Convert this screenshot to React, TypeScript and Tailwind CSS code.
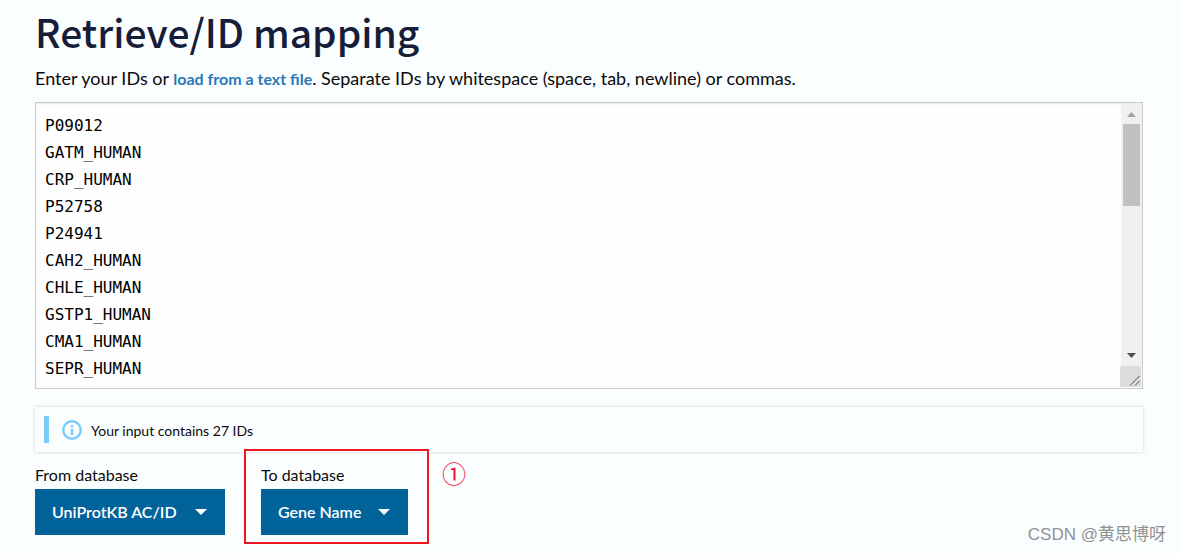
import { useState } from 'react';

const INITIAL_IDS = [
  'P09012',
  'GATM_HUMAN',
  'CRP_HUMAN',
  'P52758',
  'P24941',
  'CAH2_HUMAN',
  'CHLE_HUMAN',
  'GSTP1_HUMAN',
  'CMA1_HUMAN',
  'SEPR_HUMAN',
];

function DatabaseSelect({
  id,
  label,
  option,
  width,
}: {
  id: string;
  label: string;
  option: string;
  width: string;
}) {
  return (
    <div className="flex flex-col">
      <label htmlFor={id} className="text-base leading-7">
        {label}
      </label>
      <div className="relative">
        <select
          id={id}
          className={`h-[46px] appearance-none bg-[#00639a] pl-[17px] text-base font-semibold text-white ${width}`}
        >
          <option>{option}</option>
        </select>
        <svg
          className="pointer-events-none absolute top-1/2 right-[18px] h-[6px] w-3 -translate-y-1/2"
          viewBox="0 0 12 6"
          fill="#fff"
        >
          <path d="M0 0h12L6 6z" />
        </svg>
      </div>
    </div>
  );
}

function ScrollTrack() {
  return (
    <div className="flex w-[22px] flex-col">
      <div className="ml-px flex flex-1 flex-col items-center bg-[#f0f0f0] pr-px">
        <svg className="mt-[9px] h-[5px] w-[9px]" viewBox="0 0 9 5" fill="#a3a3a3">
          <path d="M0 5h9L4.500 0z" />
        </svg>
        <div className="mt-[7px] h-[82px] w-[17px] bg-[#c1c1c1]" />
        <svg className="mt-auto mb-2 h-[5px] w-[9px]" viewBox="0 0 9 5" fill="#505050">
          <path d="M0 0h9L4.500 5z" />
        </svg>
      </div>
      {/* resize grip */}
      <div className="mr-px mb-px h-[21px] bg-[#dcdcdc]">
        <svg className="h-full w-full" viewBox="0 0 21 21" stroke="#505050" strokeWidth="1">
          <path d="M10 19.500l9.500-9.500M15 19.500l4.500-4.500" />
        </svg>
      </div>
    </div>
  );
}

export default function App() {
  const [ids, setIds] = useState(INITIAL_IDS.join('\n'));

  return (
    <main className="relative min-h-screen bg-[#fbfeff] pr-[37px] pl-[35px] font-['Lato',sans-serif] text-[#0a0a0a]">
      <h1 className="pt-px pb-[3px] font-['Noto_Sans_CJK_SC',sans-serif] text-[39px] leading-[60px] font-medium text-[#161d39]">
        Retrieve/ID mapping
      </h1>
      <label htmlFor="ids" className="block pb-[9px] text-lg leading-[29px]">
        Enter your IDs or{' '}
        <a href="#upload" className="text-base font-bold text-[#2a78b8]">
          load from a text file
        </a>
        . Separate IDs by whitespace (space, tab, newline) or commas.
      </label>

      <div className="flex h-[287px] border border-[#cacaca] bg-[#fefefe] shadow-[inset_0_1px_2px_rgba(10,10,10,0.1)]">
        <textarea
          id="ids"
          value={ids}
          onChange={(e) => setIds(e.target.value)}
          spellCheck={false}
          className="flex-1 resize-none px-[9px] pt-[9px] font-['DejaVu_Sans_Mono',monospace] text-base leading-[27px] text-black outline-none [scrollbar-width:none]"
        />
        <ScrollTrack />
      </div>

      <div className="mt-[18px] flex h-[45px] items-center px-[9px] shadow-[0_0_3px_rgba(0,0,0,0.2)]">
        <span className="h-[27px] w-[5px] bg-[#7accfa]" />
        <svg
          className="ml-[13px] h-5 w-5"
          viewBox="0 0 20 20"
          fill="none"
          stroke="#7accfa"
          strokeWidth="2.400"
        >
          <circle cx="10" cy="10" r="8.800" />
          <path d="M10 8.500v6.500M10 5v2.200" />
        </svg>
        <p className="ml-[9px] pt-0.5 text-sm">Your input contains 27 IDs</p>
      </div>

      <div className="mt-[9px] flex gap-9">
        <DatabaseSelect
          id="from-db"
          label="From database"
          option="UniProtKB AC/ID"
          width="w-[190px]"
        />
        <div className="relative">
          <DatabaseSelect id="to-db" label="To database" option="Gene Name" width="w-[147px]" />
          <div className="pointer-events-none absolute -top-3 -right-[21px] -bottom-[9px] -left-[17px] border-2 border-[#ed1620]" />
          <span className="absolute -top-0.5 left-[181px] font-['Noto_Sans_CJK_SC',sans-serif] text-2xl leading-7 text-[#ec1238]">
            ①
          </span>
        </div>
      </div>

      <p className="absolute right-[14px] bottom-1 font-['Liberation_Sans','Noto_Sans_CJK_SC',sans-serif] text-[17px] leading-7 text-[#8f9193]">
        CSDN @黄思博呀
      </p>
    </main>
  );
}
